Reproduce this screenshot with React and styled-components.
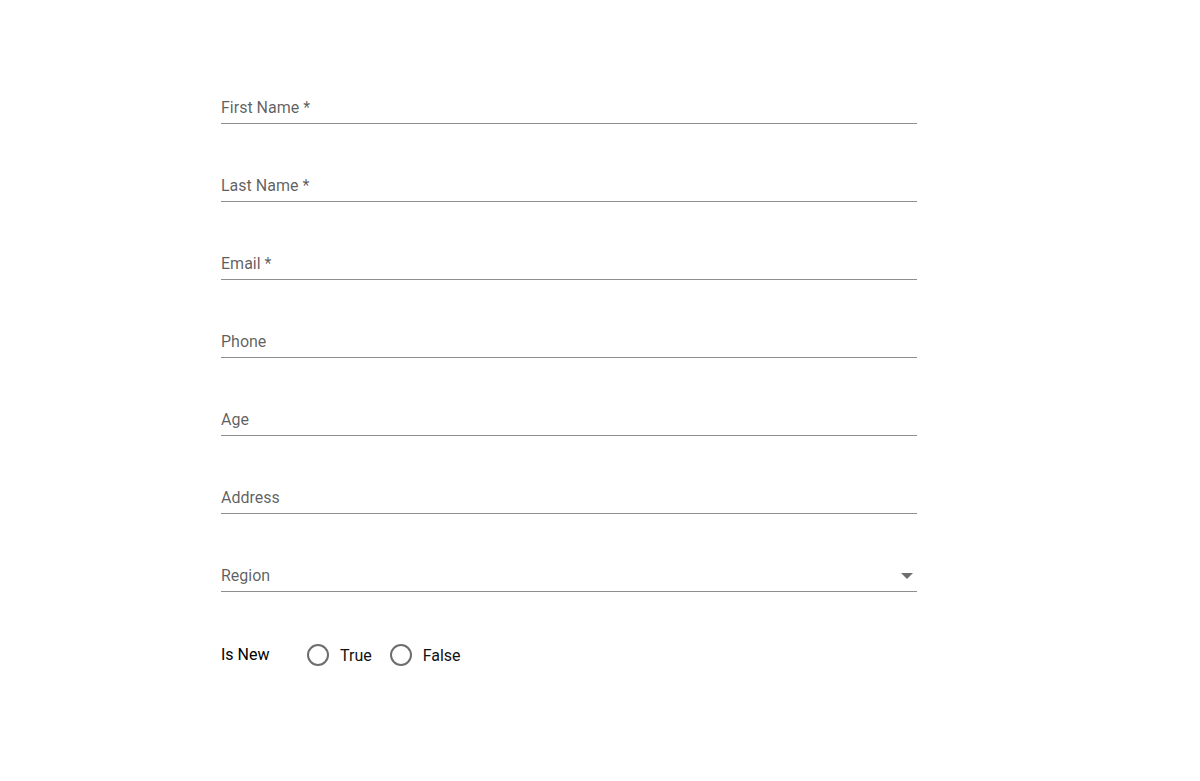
import React from "react";
import styled, { createGlobalStyle } from "styled-components";

const fields = [
  { name: "firstName", label: "First Name *" },
  { name: "lastName", label: "Last Name *" },
  { name: "email", label: "Email *" },
  { name: "phone", label: "Phone" },
  { name: "age", label: "Age" },
  { name: "address", label: "Address" },
  { name: "region", label: "Region", select: true },
];

function App() {
  return (
    <>
      <GlobalStyle />
      <FormStyled>
        {fields.map((f) => (
          <Field key={f.name}>
            <Label>{f.label}</Label>
            {f.select && (
              <DropArrow viewBox="0 0 12 6">
                <path d="M0 0l6 6 6-6z" />
              </DropArrow>
            )}
          </Field>
        ))}
        <RadioRow>
          <RadioLabel>Is New</RadioLabel>
          <RadioGroup>
            {["True", "False"].map((opt) => (
              <RadioItem key={opt}>
                <RadioIcon viewBox="0 0 24 24">
                  <circle cx="12" cy="12" r="10" />
                </RadioIcon>
                {opt}
              </RadioItem>
            ))}
          </RadioGroup>
        </RadioRow>
      </FormStyled>
    </>
  );
}

const GlobalStyle = createGlobalStyle`
  body {
    margin: 0;
    background: #fff;
    font-family: Roboto, "Liberation Sans", sans-serif;
  }
`;

const FormStyled = styled.div`
  padding: 46px 0 0 221px;
  width: 696px;
`;

const Field = styled.div`
  position: relative;
  display: flex;
  align-items: flex-end;
  height: 78px;
  box-sizing: border-box;
  padding-bottom: 6px;
  border-bottom: 1px solid #8e8e8e;
`;

const Label = styled.span`
  font-size: 16px;
  line-height: 19px;
  color: rgba(0, 0, 0, 0.64);
`;

const DropArrow = styled.svg`
  position: absolute;
  right: 4px;
  bottom: 12px;
  width: 12px;
  height: 6px;
  fill: #6f6f6f;
`;

const RadioRow = styled.div`
  display: flex;
  align-items: center;
  height: 24px;
  margin-top: 50px;
`;

const RadioLabel = styled.span`
  width: 85px;
  font-size: 16px;
  line-height: 19px;
  color: #000;
`;

const RadioGroup = styled.div`
  display: flex;
  align-items: center;
  gap: 17px;
`;

const RadioItem = styled.label`
  display: flex;
  align-items: center;
  gap: 10px;
  font-size: 16px;
  line-height: 19px;
  color: #111;
  margin-top: 2px;
`;

const RadioIcon = styled.svg`
  width: 24px;
  height: 24px;
  fill: none;
  stroke: #6e6e6e;
  stroke-width: 2;
`;

export default App;
